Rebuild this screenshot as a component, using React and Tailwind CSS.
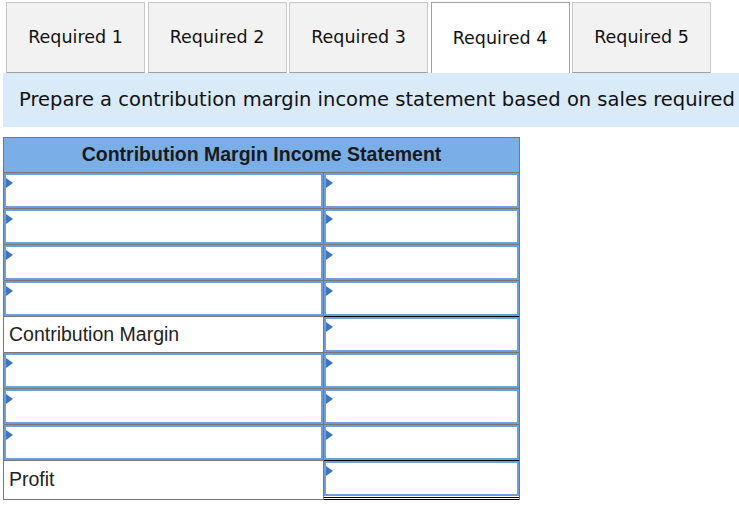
import React from "react";

const tabs = ["Required 1", "Required 2", "Required 3", "Required 4", "Required 5"];

const rows = [
  { type: "input" },
  { type: "input" },
  { type: "input" },
  { type: "input" },
  { type: "label", label: "Contribution Margin", topRule: true },
  { type: "input" },
  { type: "input" },
  { type: "input" },
  { type: "label", label: "Profit", topRule: true, doubleRule: true },
];

// blue framed input box with the little marker at top-left
const InputBox = () => (
  <div className="relative h-full w-full border-2 border-[#6d9ed9] bg-white">
    <span className="absolute left-0 top-[3px] h-0 w-0 border-y-[5px] border-l-[7px] border-y-transparent border-l-[#3b76c2]" />
  </div>
);

const App = () => {
  return (
    <div className="h-[514px] w-[739px] overflow-hidden bg-white" style={{ fontFamily: '"DejaVu Sans", Verdana, sans-serif' }}>
      {/* tabs */}
      <div className="flex gap-[2.5px] pl-[6px] pt-[2px]">
        {tabs.map((t, i) => (
          <div
            key={t}
            className={
              i === 3
                ? "flex h-[71px] w-[139px] items-center justify-center border border-b-0 border-[#a0a0a0] bg-white pt-px text-[17.5px] text-[#111]"
                : "flex h-[71px] w-[139px] items-center justify-center border border-b-[#a0a0a0] border-[#c8c8c8] bg-[#f2f2f2] text-[17.5px] text-[#111]"
            }
          >
            {t}
          </div>
        ))}
      </div>

      {/* instruction */}
      <div className="ml-[3px] flex h-[54px] items-center whitespace-nowrap bg-[#d9eaf9] pl-[16px] text-[19.5px] text-[#111]">
        Prepare a contribution margin income statement based on sales required
      </div>

      {/* statement */}
      <div className="ml-[3px] mt-[10px] w-[517px]" style={{ fontFamily: '"Liberation Sans", Arial, sans-serif' }}>
        <div className="flex h-[36px] items-center justify-center border border-[#777] bg-[#7aaee6] text-[19.5px] font-bold text-[#1a1a1a]">
          Contribution Margin Income Statement
        </div>
        {rows.map((r, i) => (
          <div key={i} className={r.doubleRule ? "flex h-[39px]" : "flex h-[36px]"}>
            <div className="w-[321px] border-x border-b border-[#777]">
              {r.type === "input" ? (
                <InputBox />
              ) : (
                <div className="flex h-full items-center pl-[5px] text-[19.5px] text-[#222]">{r.label}</div>
              )}
            </div>
            <div className={"flex-1 border-r border-[#777] " + (r.doubleRule ? "" : "border-b ") + (r.topRule ? "relative" : "")}>
              {r.topRule && <span className="absolute -top-px left-0 right-0 h-[2px] bg-black" />}
              <div className={r.doubleRule ? "h-[35px]" : "h-full"}>
                <InputBox />
              </div>
              {r.doubleRule && <div className="mt-px h-[3px] border-y border-black" />}
            </div>
          </div>
        ))}
      </div>
    </div>
  );
};

export default App;
